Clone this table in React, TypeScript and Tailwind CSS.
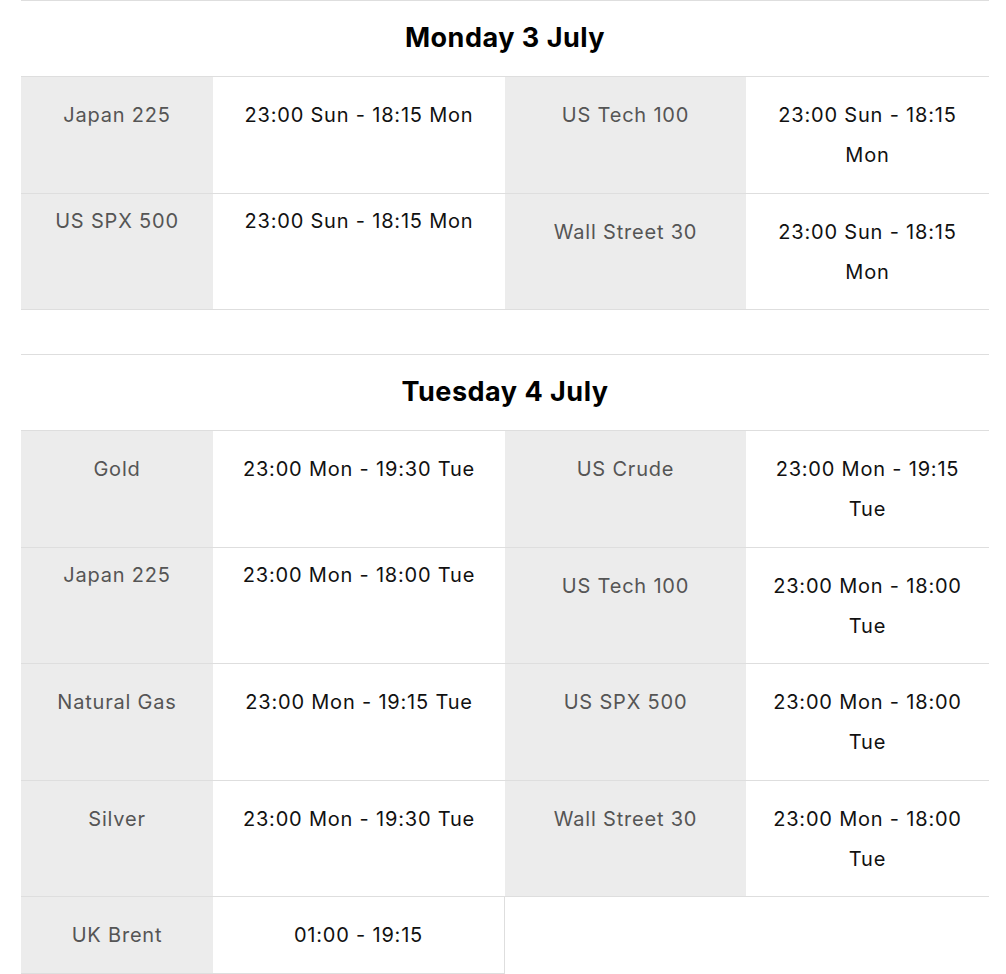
import React from "react";

type Pair = { label: string; value: string; pt?: string };
type Row = Pair[];

function Cell({ pair, last }: { pair: Pair; last?: boolean }) {
  const pt = pair.pt ?? "pt-[18px]";
  return (
    <>
      <div
        className={`bg-[#ececec] border-b border-[#dedede] px-4 ${pt} pb-[17.5px] text-center text-[20px] leading-[40px] tracking-[0.8px] text-[#555555]`}
      >
        {pair.label}
      </div>
      <div
        className={`bg-white border-b border-[#dedede] px-4 ${pt} pb-[17.5px] text-center text-[20px] leading-[40px] tracking-[0.8px] text-[#111111] ${
          last ? "border-r" : ""
        }`}
      >
        {pair.value}
      </div>
    </>
  );
}

function Section({ title, rows }: { title: string; rows: Row[] }) {
  return (
    <section className="border-t border-[#dedede] mb-[44px]">
      <h2 className="pt-[19px] pb-[20px] text-center text-[27px] leading-[36px] tracking-[0.5px] font-bold text-black">
        {title}
      </h2>
      <div className="grid grid-cols-[192px_292px_241px_243px] border-t border-[#dedede]">
        {rows.map((row, i) => (
          <React.Fragment key={i}>
            {row.map((p, j) => (
              <Cell key={j} pair={p} last={row.length === 1} />
            ))}
            {row.length === 1 && (
              <>
                <div />
                <div />
              </>
            )}
          </React.Fragment>
        ))}
      </div>
    </section>
  );
}

export default function App() {
  const monday: Row[] = [
    [
      { label: "Japan 225", value: "23:00 Sun - 18:15 Mon" },
      { label: "US Tech 100", value: "23:00 Sun - 18:15 Mon" },
    ],
    [
      { label: "US SPX 500", value: "23:00 Sun - 18:15 Mon", pt: "pt-[7px]" },
      { label: "Wall Street 30", value: "23:00 Sun - 18:15 Mon" },
    ],
  ];
  const tuesday: Row[] = [
    [
      { label: "Gold", value: "23:00 Mon - 19:30 Tue" },
      { label: "US Crude", value: "23:00 Mon - 19:15 Tue" },
    ],
    [
      { label: "Japan 225", value: "23:00 Mon - 18:00 Tue", pt: "pt-[7px]" },
      { label: "US Tech 100", value: "23:00 Mon - 18:00 Tue" },
    ],
    [
      { label: "Natural Gas", value: "23:00 Mon - 19:15 Tue" },
      { label: "US SPX 500", value: "23:00 Mon - 18:00 Tue" },
    ],
    [
      { label: "Silver", value: "23:00 Mon - 19:30 Tue" },
      { label: "Wall Street 30", value: "23:00 Mon - 18:00 Tue" },
    ],
    [{ label: "UK Brent", value: "01:00 - 19:15" }],
  ];
  return (
    <div
      className="min-h-[974px] bg-white pl-[21px]"
      style={{ fontFamily: "Inter, 'Noto Sans', 'Liberation Sans', sans-serif" }}
    >
      <div className="w-[968px]">
        <Section title="Monday 3 July" rows={monday} />
        <Section title="Tuesday 4 July" rows={tuesday} />
      </div>
    </div>
  );
}
